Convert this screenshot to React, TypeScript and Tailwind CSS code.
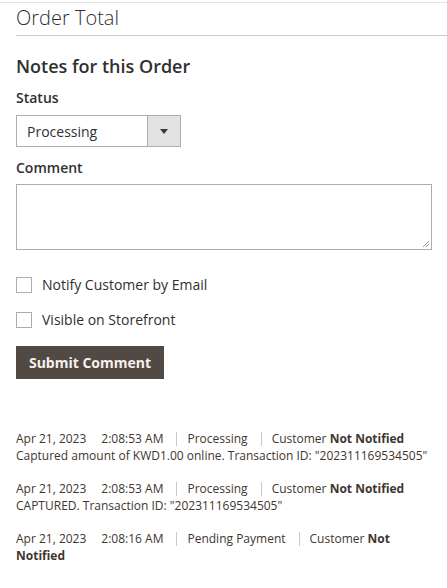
import React from "react";

type Note = {
  date: string;
  time: string;
  status: string;
  comment: string;
};

const notes: Note[] = [
  {
    date: "Apr 21, 2023",
    time: "2:08:53 AM",
    status: "Processing",
    comment: 'Captured amount of KWD1.00 online. Transaction ID: "202311169534505"',
  },
  {
    date: "Apr 21, 2023",
    time: "2:08:53 AM",
    status: "Processing",
    comment: 'CAPTURED. Transaction ID: "202311169534505"',
  },
  {
    date: "Apr 21, 2023",
    time: "2:08:16 AM",
    status: "Pending Payment",
    comment: "",
  },
];

function Divider() {
  return <span className="inline-block w-px h-[14px] bg-[#c8c8c8] align-[-3px] ml-[13px] mr-[10px]" />;
}

function Checkbox({ label }: { label: string }) {
  return (
    <label className="flex items-center gap-[10px] text-[14px] leading-[20px] text-[#303030]">
      <span className="w-4 h-4 border border-[#adadad] bg-white shrink-0" />
      {label}
    </label>
  );
}

export default function App() {
  return (
    <div
      className="min-h-screen bg-white text-[#303030]"
      style={{ fontFamily: '"Open Sans", "Liberation Sans", sans-serif' }}
    >
      <div className="pt-[2px]">
        <div className="border-t border-[#e3e3e3]" />
      </div>
      <div className="ml-4 pt-[1px] pb-[3px] border-b border-[#cccccc]">
        <h2 className="text-[20px] leading-[28px] font-light">Order Total</h2>
      </div>

      <div className="pl-4 pr-[15px]">
        <h3 className="mt-[18px] text-[18px] leading-[24px] font-semibold">
          Notes for this Order
        </h3>

        <div className="mt-[10px] text-[14px] leading-[20px] font-semibold">Status</div>
        <div className="mt-[7px] flex w-[165px] h-[32px] border border-[#adadad]">
          <div className="flex-1 flex items-center pl-[10px] text-[14px]">Processing</div>
          <div className="w-[33px] border-l border-[#adadad] bg-[#e3e3e3] flex items-center justify-center">
            <svg width="8" height="5" viewBox="0 0 8 5">
              <path d="M0 0h8L4 5z" fill="#41362f" />
            </svg>
          </div>
        </div>

        <div className="mt-[11px] text-[14px] leading-[20px] font-semibold">Comment</div>
        <div className="relative mt-[6px] h-[66px] border border-[#adadad]">
          <svg className="absolute right-[1px] bottom-[1px]" width="8" height="8" viewBox="0 0 8 8">
            <path d="M7 1L1 7M7 4L4 7" stroke="#9a9a9a" strokeWidth="1" />
          </svg>
        </div>

        <div className="mt-[25px] flex flex-col gap-[15px]">
          <Checkbox label="Notify Customer by Email" />
          <Checkbox label="Visible on Storefront" />
        </div>

        <button className="mt-[16px] h-[33px] w-[148px] bg-[#514943] text-[#f6f1ed] text-[14px] font-bold">
          Submit Comment
        </button>

        <ul className="mt-[51px] flex flex-col gap-[16px] text-[12px] leading-[17px] text-[#41362f]">
          {notes.map((n, i) => (
            <li key={i}>
              <div>
                <span>{n.date}</span>
                <span className="ml-[15px]">{n.time}</span>
                <Divider />
                <span>{n.status}</span>
                <Divider />
                <span>
                  Customer <b className="font-bold">Not Notified</b>
                </span>
              </div>
              {n.comment && <div>{n.comment}</div>}
            </li>
          ))}
        </ul>
      </div>
    </div>
  );
}
